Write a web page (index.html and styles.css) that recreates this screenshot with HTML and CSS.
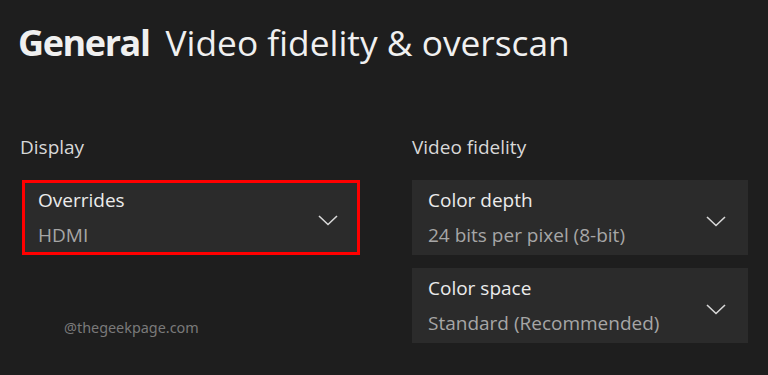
FILE: index.html
```html
<!DOCTYPE html>
<html>
<head>
<meta charset="utf-8">
<link rel="stylesheet" href="styles.css">
</head>
<body>
<div class="page">
  <h1 class="title"><span class="title-bold">General</span><span class="title-light">Video fidelity &amp; overscan</span></h1>
  <div class="columns">
    <section class="col col-left">
      <div class="label">Display</div>
      <div class="card card-selected">
        <div class="card-text">
          <div class="card-name">Overrides</div>
          <div class="card-value">HDMI</div>
        </div>
        <svg class="chev" width="20" height="11" viewBox="0 0 20 11"><path d="M1 1 L10 9.5 L19 1" fill="none" stroke="#d8d8d8" stroke-width="1.6"/></svg>
      </div>
      <div class="watermark">@thegeekpage.com</div>
    </section>
    <section class="col col-right">
      <div class="label">Video fidelity</div>
      <div class="card">
        <div class="card-text">
          <div class="card-name">Color depth</div>
          <div class="card-value">24 bits per pixel (8-bit)</div>
        </div>
        <svg class="chev" width="20" height="11" viewBox="0 0 20 11"><path d="M1 1 L10 9.5 L19 1" fill="none" stroke="#d8d8d8" stroke-width="1.6"/></svg>
      </div>
      <div class="card">
        <div class="card-text">
          <div class="card-name">Color space</div>
          <div class="card-value">Standard (Recommended)</div>
        </div>
        <svg class="chev" width="20" height="11" viewBox="0 0 20 11"><path d="M1 1 L10 9.5 L19 1" fill="none" stroke="#d8d8d8" stroke-width="1.6"/></svg>
      </div>
    </section>
  </div>
</div>
</body>
</html>
```
FILE: styles.css
```css
html, body {
  margin: 0;
  padding: 0;
  background: #1e1e1e;
  width: 768px;
  height: 375px;
  overflow: hidden;
}
body {
  font-family: "Open Sans", "Noto Sans", sans-serif;
  color: #e6e6e6;
}
.page {
  padding: 18px 0 0 18px;
}
.title {
  margin: 0;
  font-size: 36px;
  line-height: 48px;
  font-weight: 400;
  color: #f0f0f0;
  display: flex;
  align-items: baseline;
  gap: 16px;
  white-space: nowrap;
}
.title-bold {
  font-weight: 700;
  letter-spacing: -1.4px;
}
.title-light {
  font-size: 35.3px;
}
.columns {
  display: flex;
  gap: 52px;
  margin-top: 68px;
}
.col {
  display: flex;
  flex-direction: column;
}
.col-left {
  width: 338px;
  padding-left: 4px;
}
.col-right {
  width: 336px;
}
.label {
  font-size: 19px;
  line-height: 24px;
  color: #d8d8d8;
  margin-bottom: 21px;
  white-space: nowrap;
}
.col-left .label {
  margin-left: -2px;
}
.card {
  height: 75px;
  background: #2b2b2b;
  display: flex;
  align-items: flex-start;
  justify-content: space-between;
  padding: 8px 22px 0 16px;
  box-sizing: border-box;
  margin-bottom: 13px;
}
.card-selected {
  border: 3px solid #ff0000;
  width: 338px;
  padding: 5px 19px 0 13px;
}
.card-text {
  display: flex;
  flex-direction: column;
  gap: 11px;
}
.card-name {
  font-size: 19px;
  line-height: 24px;
  color: #ececec;
  white-space: nowrap;
}
.card-value {
  font-size: 19px;
  line-height: 24px;
  color: #a6a6a6;
  white-space: nowrap;
}
.chev {
  display: block;
  align-self: center;
}
.watermark {
  margin-top: 50px;
  margin-left: 42px;
  font-size: 14.4px;
  line-height: 20px;
  color: #7a7a7a;
  font-family: "Noto Sans", sans-serif;
}
```
